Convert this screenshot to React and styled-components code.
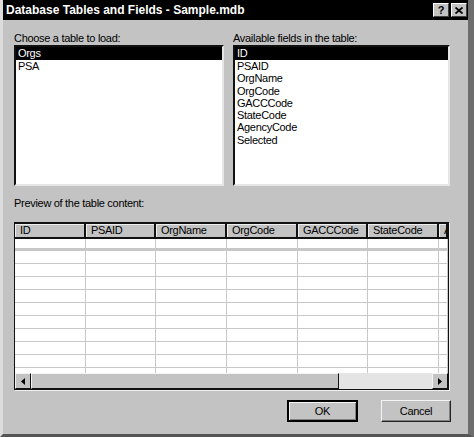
import styled, { createGlobalStyle } from 'styled-components'

const GlobalStyle = createGlobalStyle`
  body {
    margin: 0;
    background: #c3c3c3;
    font-family: 'Liberation Sans', Arial, sans-serif;
  }
`

const Window = styled.div`
  width: 474px;
  height: 437px;
  box-sizing: border-box;
  background: #c3c3c3;
  border-left: 3px solid #dcdcdc;
  border-right: 6px solid #6e6e6e;
  border-bottom: 3px solid #555;
  display: flex;
  flex-direction: column;
  font-size: 11px;
  letter-spacing: -0.3px;
  color: #000;
`

const TitleBar = styled.div`
  height: 20px;
  background: #000;
  display: flex;
  align-items: center;
  padding: 0 1px 0 3px;
  flex-shrink: 0;
`

const Title = styled.div`
  flex: 1;
  color: #fff;
  font-weight: bold;
  font-size: 12px;
  letter-spacing: 0;
`

const CaptionButtons = styled.div`
  display: flex;
  gap: 2px;
`

const CaptionButton = styled.div`
  width: 16px;
  height: 14px;
  box-sizing: border-box;
  background: #c3c3c3;
  border: 1px solid;
  border-color: #fff #404040 #404040 #fff;
  display: flex;
  align-items: center;
  justify-content: center;
  font-weight: bold;
  font-size: 11px;
  line-height: 1;
`

const Body = styled.div`
  padding: 12px 17px 0 11px;
  display: flex;
  flex-direction: column;
`

const TopRow = styled.div`
  display: grid;
  grid-template-columns: 210px 217px;
  column-gap: 9px;
`

const Label = styled.div`
  height: 13px;
  line-height: 13px;
  white-space: nowrap;
`

const ListBox = styled.div`
  height: 141px;
  box-sizing: border-box;
  background: #fff;
  border: 2px solid;
  border-color: #111 #e6e6e6 #e6e6e6 #111;
  overflow: hidden;
`

const ListItem = styled.div`
  height: ${(p) => (p.$selected ? 13 : 12.3)}px;
  line-height: 12px;
  padding-left: 2px;
  white-space: nowrap;
  background: ${(p) => (p.$selected ? '#000' : 'transparent')};
  color: ${(p) => (p.$selected ? '#fff' : '#000')};
`

const PreviewLabel = styled(Label)`
  margin-top: 11px;
`

const Grid = styled.div`
  margin-top: 12px;
  width: 435px;
  height: 168px;
  box-sizing: border-box;
  border: 1px solid #111;
  box-shadow: 1px 1px 0 #f0f0f0;
  background: #fff;
  display: flex;
  flex-direction: column;
  overflow: hidden;
`

const Columns = '71px 70px 71px 71px 70px 71px 1fr'

const HeaderRow = styled.div`
  display: grid;
  grid-template-columns: ${Columns};
  height: 16px;
  flex-shrink: 0;
  border-top: 1px solid #111;
  box-sizing: border-box;
`

const HeaderCell = styled.div`
  background: #c3c3c3;
  border-right: 2px solid #111;
  border-bottom: 2px solid #111;
  box-shadow: inset 1px 1px 0 #eee;
  padding-left: 5px;
  line-height: 13px;
  overflow: hidden;
  white-space: nowrap;
  text-overflow: clip;
`

const Rows = styled.div`
  flex: 1;
  overflow: hidden;
`

const DataRow = styled.div`
  display: grid;
  grid-template-columns: ${Columns};
  height: ${(p) => (p.$first ? 12 : 13)}px;
  box-sizing: border-box;
  border-bottom: ${(p) => (p.$first ? 3 : 1)}px solid #c8c8c8;
`

const DataCell = styled.div`
  border-right: 1px solid #c8c8c8;
`

const ScrollBar = styled.div`
  height: 16px;
  display: flex;
  flex-shrink: 0;
  background: #e4e4e4;
`

const ScrollButton = styled.div`
  width: 16px;
  height: 16px;
  box-sizing: border-box;
  background: #c3c3c3;
  border: 1px solid;
  border-color: #f4f4f4 #111 #111 #f4f4f4;
  display: flex;
  align-items: center;
  justify-content: center;
`

const Thumb = styled.div`
  width: 308px;
  height: 16px;
  box-sizing: border-box;
  background: #c3c3c3;
  border: 1px solid;
  border-color: #f4f4f4 #111 #111 #f4f4f4;
`

const Track = styled.div`
  flex: 1;
`

const ButtonRow = styled.div`
  margin-top: 10px;
  display: flex;
  justify-content: flex-end;
  gap: 23px;
`

const Button = styled.button`
  width: ${(p) => p.$width}px;
  height: 22px;
  box-sizing: border-box;
  background: #c3c3c3;
  font-family: inherit;
  font-size: 11px;
  letter-spacing: -0.3px;
  color: #000;
  padding: 0;
  border: ${(p) => (p.$default ? '2px' : '1px')} solid;
  border-color: ${(p) =>
    p.$default ? '#000' : '#f4f4f4 #222 #222 #f4f4f4'};
  box-shadow: ${(p) =>
    p.$default
      ? 'inset 1px 1px 0 #f4f4f4, inset -1px -1px 0 #808080'
      : 'inset -1px -1px 0 #808080'};
`

const tables = ['Orgs', 'PSA']
const fields = [
  'ID',
  'PSAID',
  'OrgName',
  'OrgCode',
  'GACCCode',
  'StateCode',
  'AgencyCode',
  'Selected',
]
// last column is cut off by the grid edge, only its first letter shows
const headers = [...fields.slice(0, 6), 'A']

const Arrow = ({ dir }) => (
  <svg width='4' height='7' viewBox='0 0 4 7'>
    {dir === 'left' ? (
      <polygon points='4,0 4,7 0,3.5' fill='#000' />
    ) : (
      <polygon points='0,0 0,7 4,3.5' fill='#000' />
    )}
  </svg>
)

const App = () => (
  <>
    <GlobalStyle />
    <Window>
      <TitleBar>
        <Title>Database Tables and Fields - Sample.mdb</Title>
        <CaptionButtons>
          <CaptionButton>?</CaptionButton>
          <CaptionButton>
            <svg width='8' height='7' viewBox='0 0 8 7'>
              <path d='M0.5 0.5 L7.5 6.5 M7.5 0.5 L0.5 6.5' stroke='#000' strokeWidth='1.8' />
            </svg>
          </CaptionButton>
        </CaptionButtons>
      </TitleBar>
      <Body>
        <TopRow>
          <div>
            <Label>Choose a table to load:</Label>
            <ListBox>
              {tables.map((t, i) => (
                <ListItem key={t} $selected={i === 0}>
                  {t}
                </ListItem>
              ))}
            </ListBox>
          </div>
          <div>
            <Label>Available fields in the table:</Label>
            <ListBox>
              {fields.map((f, i) => (
                <ListItem key={f} $selected={i === 0}>
                  {f}
                </ListItem>
              ))}
            </ListBox>
          </div>
        </TopRow>
        <PreviewLabel>Preview of the table content:</PreviewLabel>
        <Grid>
          <HeaderRow>
            {headers.map((h) => (
              <HeaderCell key={h}>{h}</HeaderCell>
            ))}
          </HeaderRow>
          <Rows>
            {Array.from({ length: 11 }).map((_, r) => (
              <DataRow key={r} $first={r === 0}>
                {headers.map((h) => (
                  <DataCell key={h} />
                ))}
              </DataRow>
            ))}
          </Rows>
          <ScrollBar>
            <ScrollButton>
              <Arrow dir='left' />
            </ScrollButton>
            <Thumb />
            <Track />
            <ScrollButton>
              <Arrow dir='right' />
            </ScrollButton>
          </ScrollBar>
        </Grid>
        <ButtonRow>
          <Button $default $width={71}>
            OK
          </Button>
          <Button $width={70}>Cancel</Button>
        </ButtonRow>
      </Body>
    </Window>
  </>
)

export default App
